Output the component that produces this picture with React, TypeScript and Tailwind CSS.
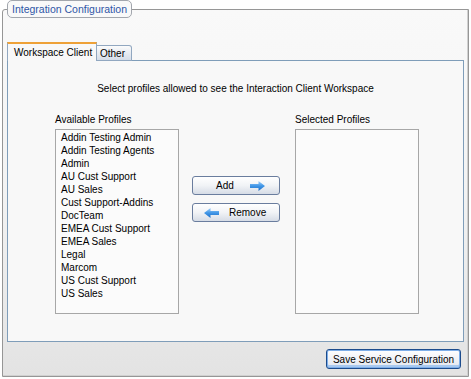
import React from 'react';

const available = [
  'Addin Testing Admin',
  'Addin Testing Agents',
  'Admin',
  'AU Cust Support',
  'AU Sales',
  'Cust Support-Addins',
  'DocTeam',
  'EMEA Cust Support',
  'EMEA Sales',
  'Legal',
  'Marcom',
  'US Cust Support',
  'US Sales',
];

function Arrow({ dir }: { dir: 'left' | 'right' }) {
  const id = 'g' + dir;
  return (
    <svg width="15" height="10" viewBox="0 0 15 10" className="block">
      <defs>
        <linearGradient id={id} x1="0" y1="0" x2="0" y2="1">
          <stop offset="0" stopColor="#9fd0fb" />
          <stop offset="0.5" stopColor="#3f95e6" />
          <stop offset="1" stopColor="#1f6fc8" />
        </linearGradient>
      </defs>
      <path
        d={dir === 'right' ? 'M0 3 H8.5 V0 L15 5 L8.5 10 V7 H0 Z' : 'M15 3 H6.5 V0 L0 5 L6.5 10 V7 H15 Z'}
        fill={`url(#${id})`}
      />
    </svg>
  );
}

const btn =
  'flex items-center border border-[#6a7d9e] rounded-[3px] bg-gradient-to-b from-[#ffffff] via-[#f1f3f6] to-[#d6dce6] text-black';

export default function App() {
  return (
    <div className="w-[471px] h-[379px] bg-white font-['Liberation_Sans',Arial,sans-serif] text-[10px] text-black">
      <fieldset className="ml-[2px] w-[467px] h-[377px] border border-[#969696] rounded-tl-[3px] bg-gradient-to-b from-[#f9f9f9] via-[#f3f3f3] to-[#e3e3e3] shadow-[inset_-1px_-1px_0_#d0d0d0]">
        <legend className="ml-[4px] h-[18px] px-[4px] border border-[#a2a6ad] rounded-[5px] bg-[#f9f9f9] text-[#2f56a6] text-[10.5px] leading-[16px]">
          Integration Configuration
        </legend>

        <div className="mt-[24px] ml-[4px] flex items-end -mb-px relative z-10">
          <div className="h-[19px] w-[90px] border-t-2 border-t-[#eea137] border-x border-x-[#91a7c0] bg-[#f8f8f8] pl-[6px] pt-[1px] leading-[15px] whitespace-nowrap">
            Workspace Client
          </div>
          <div className="h-[16px] w-[35px] border border-[#91a7c0] border-l-0 rounded-tr-[3px] bg-gradient-to-b from-[#fbfbfb] to-[#d5dde9] pl-[3px] leading-[15px] whitespace-nowrap">
            Other
          </div>
        </div>

        <div className="ml-[4px] w-[457px] h-[282px] border border-[#7f9db9] bg-[#f8f8f8] flex flex-col">
          <div className="mt-[21px] text-center leading-[13px]">
            Select profiles allowed to see the Interaction Client Workspace
          </div>
          <div className="mt-[18px] pl-[47px] flex">
            <div className="w-[124px]">
              <div className="leading-[13px]">Available Profiles</div>
              <div className="mt-[3px] h-[185px] border border-[#a7a7a7] bg-[#fbfbfb] pt-[1px] pl-[5px]">
                {available.map((p) => (
                  <div key={p} className="leading-[13px] whitespace-nowrap">
                    {p}
                  </div>
                ))}
              </div>
            </div>
            <div className="ml-[13px] w-[88px] pt-[63px]">
              <button className={`${btn} w-[88px] h-[19px] pl-[23px]`}>
                <span>Add</span>
                <span className="ml-[16px]">
                  <Arrow dir="right" />
                </span>
              </button>
              <button className={`${btn} mt-[8px] w-[88px] h-[19px] pl-[11px]`}>
                <Arrow dir="left" />
                <span className="ml-[10px]">Remove</span>
              </button>
            </div>
            <div className="ml-[15px] w-[124px]">
              <div className="leading-[13px]">Selected Profiles</div>
              <div className="mt-[3px] h-[185px] border border-[#a7a7a7] bg-[#fbfbfb]" />
            </div>
          </div>
        </div>

        <div className="mt-[7px] pr-[7px] flex justify-end">
          <button className="w-[135px] h-[20px] rounded-[3px] border border-[#1c4b8c] shadow-[inset_0_0_0_1px_#7eaee8,inset_0_-2px_0_1px_#a9c9ef] bg-gradient-to-b from-[#ffffff] to-[#e2e6ee] flex items-center justify-center">
            Save Service Configuration
          </button>
        </div>
      </fieldset>
    </div>
  );
}
